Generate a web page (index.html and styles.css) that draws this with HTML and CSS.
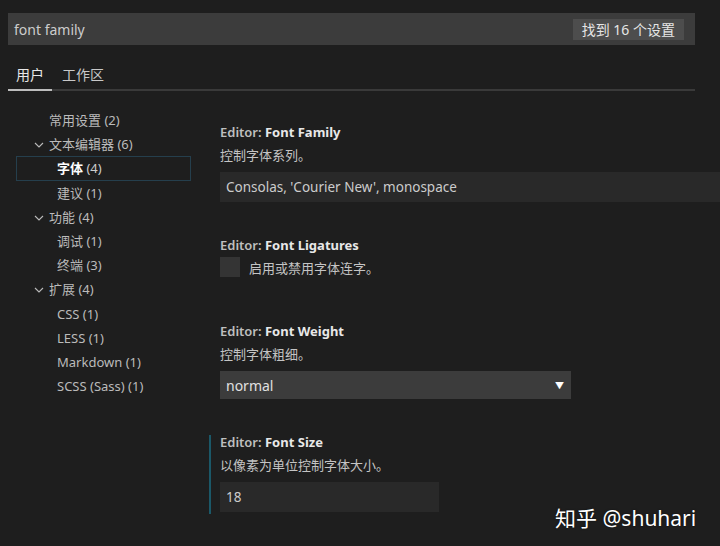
FILE: index.html
```html
<!DOCTYPE html>
<html>
<head>
  <meta charset="utf-8">
  <title>设置</title>
  <link rel="stylesheet" href="styles.css">
</head>
<body>
  <div class="header">
    <div class="search">
      <span class="search-text">font family</span>
      <span class="search-count">找到 16 个设置</span>
    </div>
    <div class="tabs">
      <span class="tab active">用户</span>
      <span class="tab">工作区</span>
    </div>
  </div>

  <div class="main">
    <ul class="tree">
      <li class="node lvl1">常用设置 (2)</li>
      <li class="node lvl1 open"><svg class="chev" viewBox="0 0 10 6"><path d="M1 1 L5 5 L9 1"/></svg>文本编辑器 (6)</li>
      <li class="node lvl2 selected">字体 <span class="num">(4)</span></li>
      <li class="node lvl2">建议 (1)</li>
      <li class="node lvl1 open"><svg class="chev" viewBox="0 0 10 6"><path d="M1 1 L5 5 L9 1"/></svg>功能 (4)</li>
      <li class="node lvl2">调试 (1)</li>
      <li class="node lvl2">终端 (3)</li>
      <li class="node lvl1 open"><svg class="chev" viewBox="0 0 10 6"><path d="M1 1 L5 5 L9 1"/></svg>扩展 (4)</li>
      <li class="node lvl2">CSS (1)</li>
      <li class="node lvl2">LESS (1)</li>
      <li class="node lvl2">Markdown (1)</li>
      <li class="node lvl2">SCSS (Sass) (1)</li>
    </ul>

    <div class="settings">
      <div class="setting">
        <div class="title"><span class="cat">Editor: </span>Font Family</div>
        <div class="desc">控制字体系列。</div>
        <div class="input wide">Consolas, 'Courier New', monospace</div>
      </div>

      <div class="setting">
        <div class="title"><span class="cat">Editor: </span>Font Ligatures</div>
        <div class="check-row">
          <span class="checkbox"></span>
          <span class="check-label">启用或禁用字体连字。</span>
        </div>
      </div>

      <div class="setting">
        <div class="title"><span class="cat">Editor: </span>Font Weight</div>
        <div class="desc">控制字体粗细。</div>
        <div class="select">
          <span>normal</span>
          <span class="arrow">▼</span>
        </div>
      </div>

      <div class="setting focused">
        <div class="title"><span class="cat">Editor: </span>Font Size</div>
        <div class="desc">以像素为单位控制字体大小。</div>
        <div class="input narrow">18</div>
      </div>
    </div>
  </div>

  <div class="watermark">知乎 @shuhari</div>
</body>
</html>
```

FILE: styles.css
```css
html, body {
  height: 100%;
}

body {
  margin: 0;
  background-color: #1e1e1e;
  color: #cccccc;
  font-family: "Segoe UI", "Noto Sans", "Noto Sans CJK SC", sans-serif;
  font-size: 13px;
  overflow: hidden;
  position: relative;
}

.header {
  padding: 13px 25px 0 8px;
}

.search {
  height: 32px;
  background-color: #3c3c3c;
  display: flex;
  align-items: center;
  justify-content: space-between;
  padding: 0 11px 0 6px;
  font-size: 14px;
}

.search-text {
  color: #cccccc;
}

.search-count {
  background-color: #4d4d4d;
  color: #e6e6e6;
  padding: 1px 9px;
  line-height: 19px;
}

.tabs {
  margin-top: 20px;
  display: flex;
  gap: 2px;
  border-bottom: 2px solid #3a3a3a;
  font-size: 14px;
}

.tab {
  padding: 0 8px 4px;
  line-height: 20px;
  color: #c8c8c8;
  margin-bottom: -2px;
  border-bottom: 2px solid transparent;
}

.tab.active {
  color: #e8e8e8;
  border-bottom-color: #bdbdbd;
}

.main {
  display: flex;
}

.tree {
  list-style: none;
  margin: 0 0 0 16px;
  padding: 17px 0 0;
  width: 175px;
  flex-shrink: 0;
}

.node {
  height: 24.2px;
  line-height: 22px;
  border: 1px solid transparent;
  box-sizing: border-box;
  color: #bbbbbb;
  white-space: nowrap;
  position: relative;
}

.lvl1 {
  padding-left: 32px;
}

.lvl2 {
  padding-left: 40px;
}

.chev {
  position: absolute;
  left: 17px;
  top: 9px;
  width: 10px;
  height: 6px;
  fill: none;
  stroke: #bbbbbb;
  stroke-width: 1.1;
}

.node.selected {
  border-color: #253f4d;
  color: #ffffff;
  font-weight: bold;
}

.node.selected .num {
  font-weight: normal;
  color: #cccccc;
}

.settings {
  margin-left: 18px;
  padding-top: 34px;
  flex: 1;
  min-width: 0;
}

.setting {
  border-left: 2px solid transparent;
  padding: 0 0 2px 9px;
  margin-bottom: 34px;
}

.setting.focused {
  border-left-color: #1b5868;
}

.title {
  line-height: 14px;
  font-weight: bold;
  color: #e8e8e8;
}

.cat {
  color: #bfbfbf;
  font-weight: 600;
}

.desc {
  margin-top: 7px;
  line-height: 18px;
  color: #c4c4c4;
}

.input {
  margin-top: 8px;
  height: 30px;
  line-height: 30px;
  padding-left: 6px;
  background-color: #292929;
  font-size: 13.5px;
  color: #cccccc;
  box-sizing: border-box;
}

/* the font family box runs on to the right edge of the pane */
.input.wide {
  width: auto;
}

.input.narrow {
  width: 219px;
}

.check-row {
  margin-top: 5px;
  margin-bottom: 11px;
  display: flex;
  align-items: center;
  height: 20px;
}

.checkbox {
  width: 20px;
  height: 20px;
  background-color: #343434;
  margin-right: 9px;
}

.check-label {
  color: #c4c4c4;
}

.select {
  margin-top: 8px;
  width: 351px;
  height: 28px;
  box-sizing: border-box;
  background-color: #3c3c3c;
  display: flex;
  align-items: center;
  justify-content: space-between;
  padding: 0 7px 0 6px;
  font-size: 14px;
  color: #e0e0e0;
}

.arrow {
  font-size: 9px;
  color: #ffffff;
}

.watermark {
  position: absolute;
  left: 555px;
  top: 502px;
  font-size: 21px;
  color: #ffffff;
  text-shadow: 0 0 2px rgba(0, 0, 0, 0.6);
}
```
